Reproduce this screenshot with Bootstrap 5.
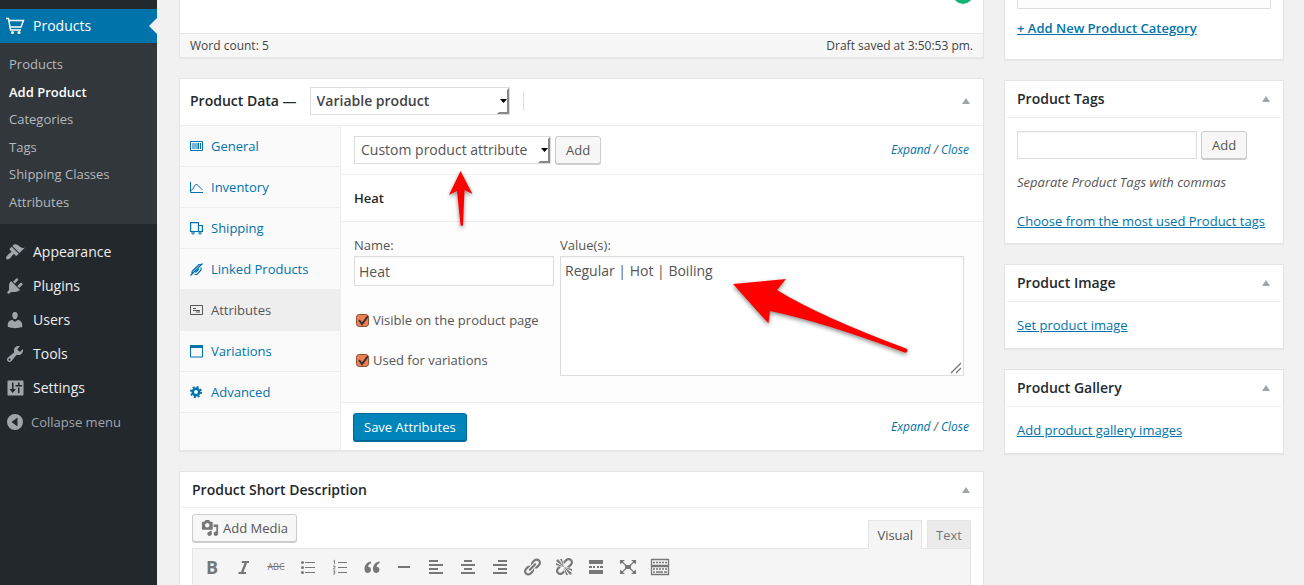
<!DOCTYPE html>
<html lang="en">
<head>
<meta charset="utf-8">
<meta name="viewport" content="width=device-width, initial-scale=1">
<title>Add Product</title>
<link rel="stylesheet" href="https://cdn.jsdelivr.net/npm/bootstrap@5.3.0/dist/css/bootstrap.min.css">
<style>
body{font:13px/18px "Open Sans",sans-serif;color:#555;background:#f1f1f1}
a{color:#0073aa}
button{font-family:inherit}
.layout{min-height:100vh}
/* admin menu */
.side{width:157px;background:#23282d;padding-top:9px;flex:none}
.side-link{display:flex;align-items:center;height:34px;padding-left:5px;gap:8px;font-size:14px;color:#eee;text-decoration:none}
.side-link svg{fill:#a0a5aa;flex:none}
.side-link .cart{fill:none;stroke:#fff}
.side-link.current{background:#0073aa;color:#fff;position:relative}
.side-link.current::after{content:"";position:absolute;right:0;top:9px;border:8px solid transparent;border-left:0;border-right-color:#f1f1f1}
.side-sub{background:#32373c;height:181px;padding:12px 9px 13px;margin-bottom:11px}
.side-sub a{color:#b4b9be;text-decoration:none}
.side-sub a.current{color:#fff;font-weight:600}
.collapse-btn{border:0;background:none;width:100%;font-size:13px;color:#a0a5aa;gap:6px}
/* boxes */
.work{padding:0 20px 0 22px;gap:20px}
.rail{width:280px;flex:none}
.box{background:#fff;border:1px solid #e5e5e5;box-shadow:0 1px 1px rgba(0,0,0,.04);margin-bottom:20px}
.box-open{border-top:0}
.box-head{display:flex;align-items:center;justify-content:space-between;height:36px;padding:0 12px;border-bottom:1px solid #eee}
.rail .box-head{height:37px;margin:0 2px;padding:0 10px}
.box-head h2{font-size:14px;font-weight:600;line-height:20px;color:#23282d;margin:0}
.fold{border:0;background:none;padding:0;width:10px;height:18px;display:flex;align-items:center;justify-content:center}
.fold::before{content:"";border:4px solid transparent;border-top:0;border-bottom:6px solid #a0a5aa}
.rail-body{padding:14px 12px}
.rail-body a,.cat-add{display:block;white-space:nowrap}
.tags-body{padding:13px 12px}
.tag-input{width:180px;height:28px}
.tags-note{font-style:italic;white-space:nowrap;margin:14px 0 21px}
.cat-add{padding:10px 0 22px;font-weight:600}
.status{height:24px;padding:0 10px;background:#f7f7f7;border-top:1px solid #e5e5e5;color:#444;font-size:12px}
.editor-end{height:33px;overflow:hidden;position:relative}
.bubble{position:absolute;right:10px;top:-16px;width:20px;height:20px;border-radius:50%;background:#15b374}
.cat-panel{height:9px;background:#fdfdfd;border:1px solid #ddd;border-top:0}
/* controls */
.form-control,.form-select{border:1px solid #ddd;border-radius:0;background-color:#fff;color:#555;font-size:14px;line-height:20px;box-shadow:inset 0 1px 2px rgba(0,0,0,.05)}
.form-control{padding:4px}
.form-select{height:28px;padding:0 20px 0 6px;line-height:24px;background-image:url("data:image/svg+xml,%3Csvg xmlns='http://www.w3.org/2000/svg' width='12' height='26'%3E%3Cpath d='M3 11h7l-3.500 4z' fill='%23000'/%3E%3Cpath d='M0 26l2-2h8V2l2-2v26z' fill='%23888'/%3E%3C/svg%3E");background-size:12px 26px;background-position:right 0 center;box-shadow:none}
.type-select{width:200px;font-weight:600;color:#444}
.attr-select{width:197px}
.btn-plain{height:28px;border:1px solid #ccc;border-radius:3px;background:#f7f7f7;box-shadow:0 1px 0 #ccc;color:#555;font-size:13px;line-height:18px;padding:0 10px}
.btn-save{height:28px;border:1px solid #006799;border-radius:3px;background:#0085ba;box-shadow:0 1px 0 #006799;color:#fff;font-size:13px;line-height:18px;padding:0 10px}
.form-check-input{width:13px;height:13px;margin:0;border:1px solid #8c5238;border-radius:3px;background-color:#ed8050}
.form-check-input:checked{border-color:#8c5238;background-color:#ed8050;background-size:13px 13px;background-image:url("data:image/svg+xml,%3Csvg xmlns='http://www.w3.org/2000/svg' viewBox='0 0 13 13'%3E%3Cpath d='M3 6l3 4 6-8' fill='none' stroke='%23333' stroke-width='2'/%3E%3C/svg%3E")}
/* product data */
.data-head{height:47px;padding:0 12px 2px 10px;border-bottom:1px solid #eee}
.data-head label{font-size:14px;font-weight:600;color:#23282d;margin-right:13px}
.split{width:1px;height:18px;background:#ddd;margin:0 auto 0 13px}
.tabs-col{width:161px;flex:none;background:#fafafa;border-right:1px solid #eee}
.tabs-col a{display:flex;align-items:center;gap:8px;height:41px;padding:0 10px;border-bottom:1px solid #eee;text-decoration:none}
.tabs-col a.active{background:#eee;color:#555}
.tabs-col svg{fill:none;stroke:currentColor;flex:none}
.bar{height:49px;padding:0 14px 1px 13px;border-bottom:1px solid #eee}
.bar-end{height:47px;padding:0 14px 0 12px}
.bar-title{height:47px;padding:0 13px;border-bottom:1px solid #eee;color:#23282d}
.bar-title h3{font-size:13px;font-weight:600;line-height:18px;margin:0}
.ec{font-size:12px}
.ec a{text-decoration:none}
.attr{height:181px;background:#fdfdfd;border-bottom:1px solid #eee;padding:14px 19px 0 13px;gap:6px}
.attr-left{width:200px;flex:none}
.attr-left .form-control{height:30px}
.field-label{display:block;padding-bottom:2px}
.checks{padding:25px 0 0 2px;gap:22px}
textarea.form-control{height:120px;min-height:120px;resize:vertical;display:block}
textarea::-webkit-resizer{background:url("data:image/svg+xml,%3Csvg xmlns='http://www.w3.org/2000/svg' width='15' height='15'%3E%3Cpath d='M3 13L13 3M8 13l5-5' stroke='%23777' stroke-width='1.300'/%3E%3C/svg%3E") no-repeat right bottom}
.pointer{position:absolute;pointer-events:none;filter:drop-shadow(0 2px 2px rgba(0,0,0,.45));fill:red;overflow:visible}
.pointer-up{left:94px;top:44px}
.pointer-left{left:173px;top:22px}
/* short description */
.desc{margin-bottom:0}
.desc-body{padding:6px 12px 0}
.desc-top{height:34px}
.modes{gap:5px}
.mode{height:28px;padding:0 8px;border:1px solid #e5e5e5;border-bottom:0;background:#ebebeb;color:#777;font-size:13px;line-height:18px}
.mode.active{height:29px;background:#f5f5f5;color:#555;margin-bottom:-1px}
.tools{background:#f5f5f5;border:1px solid #e5e5e5;border-bottom:0;padding:4px 5px 0;gap:4px}
.tools button{width:28px;height:28px;border:0;background:none;padding:0;display:flex;align-items:center;justify-content:center;color:#777}
.tools svg,.media svg{fill:#777}
.tools .t-bold{font:700 18px/20px "Open Sans",sans-serif}
.tools .t-abc{font:400 9px/10px "Open Sans",sans-serif;text-decoration:line-through}
</style>
</head>
<body>
<div class="layout d-flex">
<nav class="side" aria-label="Admin menu">
  <a class="side-link current" href="#"><svg class="cart" width="20" height="20" viewBox="0 0 20 20" stroke-width="1.500"><path d="M1 2.500h2.500l2 11.500H16M4 4.500h14.500l-2.500 6.500H5.500"/><circle cx="7.500" cy="16.500" r=".8"/><circle cx="14" cy="16.500" r=".8"/></svg>Products</a>
  <ul class="side-sub list-unstyled d-flex flex-column justify-content-between">
    <li><a href="#">Products</a></li>
    <li><a href="#" class="current">Add Product</a></li>
    <li><a href="#">Categories</a></li>
    <li><a href="#">Tags</a></li>
    <li><a href="#">Shipping Classes</a></li>
    <li><a href="#">Attributes</a></li>
  </ul>
  <a class="side-link" href="#"><svg width="20" height="20" viewBox="0 0 20 20"><path d="M14.480 11.060L7.410 3.990l1.500-1.500c.5-.56 2.300-.47 3.510.32 1.210.8 1.430 1.280 2.910 2.100 1.180.64 2.450 1.260 4.450.85zm-.71.71L6.700 4.700 4.930 6.470c-.39.39-.39 1.020 0 1.410l1.060 1.060c.39.39.39 1.030 0 1.420-.6.6-1.430 1.110-2.210 1.690-.35.26-.7.53-1.010.84C1.430 14.230.4 16.080 1.400 17.070c.99 1 2.840-.03 4.180-1.360.31-.31.58-.66.85-1.020.57-.78 1.080-1.610 1.690-2.210.39-.39 1.020-.39 1.410 0l1.060 1.060c.39.39 1.020.39 1.410 0z"/></svg>Appearance</a>
  <a class="side-link" href="#"><svg width="20" height="20" viewBox="0 0 20 20"><path d="M13.110 4.360L9.870 7.600 8 5.730l3.240-3.240c.35-.34 1.050-.2 1.560.32.52.51.66 1.210.31 1.550zm-8 1.770l.91-1.120 9.010 9.010-1.190.84c-.71.71-2.630 1.160-3.820 1.160H6.140L4.900 17.260c-.59.59-1.540.59-2.120 0-.59-.58-.59-1.530 0-2.120l1.240-1.240v-3.880c0-1.130.4-3.190 1.090-3.890zm7.260 3.970l3.240-3.240c.34-.35 1.040-.21 1.550.31.52.51.66 1.210.31 1.550l-3.240 3.250z"/></svg>Plugins</a>
  <a class="side-link" href="#"><svg width="20" height="20" viewBox="0 0 20 20"><path d="M10 9.250c-2.270 0-2.730-3.440-2.730-3.440C7 4.020 7.820 2 9.970 2c2.160 0 2.980 2.020 2.710 3.810 0 0-.41 3.440-2.680 3.440zm0 2.570L12.720 10c2.390 0 4.520 2.330 4.520 4.530v2.490s-3.650 1.130-7.240 1.130c-3.650 0-7.240-1.130-7.240-1.130v-2.490c0-2.250 1.940-4.480 4.470-4.480z"/></svg>Users</a>
  <a class="side-link" href="#"><svg width="20" height="20" viewBox="0 0 20 20"><path d="M16.680 9.770c-1.340 1.340-3.300 1.670-4.950.99l-5.410 6.520c-.99.99-2.590.99-3.580 0s-.99-2.590 0-3.570l6.520-5.420c-.68-1.650-.35-3.610.99-4.950 1.280-1.280 3.120-1.620 4.720-1.060l-2.890 2.890 2.820 2.820 2.860-2.870c.53 1.580.18 3.390-1.080 4.650zM3.810 16.210c.4.39 1.040.39 1.430 0 .4-.4.4-1.040 0-1.430-.39-.4-1.030-.4-1.430 0-.39.39-.39 1.030 0 1.430z"/></svg>Tools</a>
  <a class="side-link" href="#"><svg width="20" height="20" viewBox="0 0 20 20"><path fill-rule="evenodd" d="M3.500 2.500h14c.6 0 1 .4 1 1v13c0 .6-.4 1-1 1h-14c-.6 0-1-.4-1-1v-13c0-.6.400-1 1-1zM7 4.500V11H4.500l3.200 4 3.200-4H8.500V4.500zM13 15V9.500h1.500V15h-1.500zM13 4.500V7h-2.500v1.500H17V7h-2.500V4.500z"/></svg>Settings</a>
  <button class="side-link collapse-btn" type="button"><svg width="20" height="20" viewBox="0 0 20 20"><path fill-rule="evenodd" d="M10 2a8 8 0 1 1 0 16 8 8 0 0 1 0-16zm2.500 3.500L6.500 10l6 4.500z"/></svg>Collapse menu</button>
</nav>

<main class="work d-flex flex-grow-1">
<div class="d-flex flex-column flex-grow-1">
  <section class="box box-open">
    <div class="editor-end"><span class="bubble"></span></div>
    <div class="status d-flex justify-content-between align-items-center"><span>Word count: 5</span><span>Draft saved at 3:50:53 pm.</span></div>
  </section>

  <section class="box">
    <div class="data-head d-flex align-items-center">
      <label for="ptype">Product Data —</label>
      <select id="ptype" class="form-select type-select"><option>Variable product</option></select>
      <span class="split"></span>
      <button class="fold" type="button" aria-label="Toggle Product Data"></button>
    </div>
    <div class="d-flex">
      <nav class="tabs-col" aria-label="Product data">
        <a href="#"><svg width="13" height="13" viewBox="0 0 13 13"><path d="M.5 1.500h12v9H.5z"/><path d="M3 3v6M5 3v6M7 3v6M8.500 3v6M10.500 3v6"/></svg>General</a>
        <a href="#"><svg width="13" height="13" viewBox="0 0 13 13"><path d="M.5 1v10.500H13M1 9.500C4 9 3.500 4 6 3.500S9 7 12.500 8.500"/></svg>Inventory</a>
        <a href="#"><svg width="13" height="13" viewBox="0 0 13 13"><path stroke-width="1.200" d="M8.500 9.500V.6H.6v8.900H12.400V3.500H8.500"/><circle cx="3" cy="11" r="1.200"/><circle cx="10" cy="11" r="1.200"/></svg>Shipping</a>
        <a href="#"><svg width="13" height="13" viewBox="0 0 13 13"><path stroke-width="1.200" d="M.5 12.500L12.500.5M5.500 5L9 1.500h3M2 8.500L5.500 5M2 8.500V11M4.500 11.500H7L11 7V4.500M5.500 9.500L9 6"/></svg>Linked Products</a>
        <a href="#" class="active"><svg width="13" height="13" viewBox="0 0 13 13"><path d="M.5 1.500h12v9H.5zM3 4.500h3M3 6.500h7M6 8h4"/></svg>Attributes</a>
        <a href="#"><svg width="13" height="13" viewBox="0 0 13 13"><path d="M.5.500h12v11.500H.5z"/><path stroke-width="3" d="M0 1.500h13"/></svg>Variations</a>
        <a href="#"><svg width="13" height="13" viewBox="0 0 13 13"><circle cx="6" cy="6" r="3.200" stroke-width="2.500"/><circle cx="6" cy="6" r="5" stroke-width="2" stroke-dasharray="2 1.930"/></svg>Advanced</a>
      </nav>
      <div class="flex-grow-1">
        <div class="bar d-flex align-items-center position-relative">
          <select class="form-select attr-select me-1" aria-label="Attribute"><option>Custom product attribute</option></select>
          <button class="btn btn-plain" type="button">Add</button>
          <em class="ec ms-auto"><a href="#">Expand</a> / <a href="#">Close</a></em>
          <svg class="pointer pointer-up" width="50" height="60" viewBox="0 0 50 60"><path d="M25.500 1L14 25l8-4 3.500 34q1.500 2 2.500 0L29.500 20l8 4z"/></svg>
        </div>
        <div class="bar-title d-flex align-items-center"><h3>Heat</h3></div>
        <div class="attr d-flex">
          <div class="attr-left">
            <label for="aname" class="field-label">Name:</label>
            <input id="aname" class="form-control" type="text" value="Heat">
            <div class="checks d-flex flex-column">
              <div class="d-flex align-items-center gap-1"><input class="form-check-input" type="checkbox" id="vis" checked><label for="vis">Visible on the product page</label></div>
              <div class="d-flex align-items-center gap-1"><input class="form-check-input" type="checkbox" id="used" checked><label for="used">Used for variations</label></div>
            </div>
          </div>
          <div class="flex-grow-1">
            <label for="avals" class="field-label">Value(s):</label>
            <div class="position-relative">
              <textarea id="avals" class="form-control">Regular | Hot | Boiling</textarea>
              <svg class="pointer pointer-left" width="176" height="76" viewBox="0 0 176 76"><path d="M0 6L53 1l-9 11Q86 38 173 70.500a2 2 0 0 1-1.500 4Q90 44 37 33l-1.500 12.500z"/></svg>
            </div>
          </div>
        </div>
        <div class="bar-end d-flex align-items-center justify-content-between">
          <button class="btn btn-save" type="button">Save Attributes</button>
          <em class="ec"><a href="#">Expand</a> / <a href="#">Close</a></em>
        </div>
      </div>
    </div>
  </section>

  <section class="box desc flex-grow-1 border-bottom-0 d-flex flex-column">
    <div class="box-head"><h2>Product Short Description</h2><button class="fold" type="button" aria-label="Toggle Product Short Description"></button></div>
    <div class="desc-body flex-grow-1 d-flex flex-column">
      <div class="desc-top d-flex justify-content-between align-items-end">
        <button class="btn btn-plain media d-flex align-items-center align-self-start px-2" type="button"><svg class="me-1" width="18" height="18" viewBox="0 0 20 20"><path d="M13 11V4c0-.55-.45-1-1-1h-1.670L9 1H5L3.670 3H2c-.55 0-1 .45-1 1v7c0 .55.45 1 1 1h10c.55 0 1-.45 1-1zM7 4.500c1.380 0 2.500 1.120 2.500 2.500S8.380 9.500 7 9.500 4.500 8.380 4.500 7 5.620 4.500 7 4.500zM14 6h5v10.500c0 1.380-1.120 2.500-2.500 2.500S14 17.880 14 16.500s1.120-2.500 2.500-2.500c.17 0 .34.02.5.05V9h-3V6zm-4 8.050V13h2v3.500c0 1.380-1.120 2.500-2.500 2.500S7 17.880 7 16.500 8.120 14 9.500 14c.17 0 .34.02.5.05z"/></svg>Add Media</button>
        <div class="modes d-flex align-items-end position-relative"><button class="mode active" type="button">Visual</button><button class="mode" type="button">Text</button></div>
      </div>
      <div class="tools d-flex flex-grow-1">
        <button type="button" aria-label="Bold" class="t-bold">B</button>
        <button type="button" aria-label="Italic"><svg width="20" height="20" viewBox="0 0 20 20"><path d="M8 4h7v2h-2L9.500 15H12v2H4.500v-2H7L10.500 6H7.500z"/></svg></button>
        <button type="button" aria-label="Strikethrough" class="t-abc">ABC</button>
        <button type="button" aria-label="Bulleted list"><svg width="20" height="20" viewBox="0 0 20 20"><path d="M7 5h10v1H7zM7 10h10v1H7zM7 15h10v1H7z"/><circle cx="4.500" cy="5.500" r="1.500"/><circle cx="4.500" cy="10.500" r="1.500"/><circle cx="4.500" cy="15.500" r="1.500"/></svg></button>
        <button type="button" aria-label="Numbered list"><svg width="20" height="20" viewBox="0 0 20 20"><path d="M8 5h9v1H8zM8 10h9v1H8zM8 15h9v1H8z"/><path fill="none" stroke="#777" stroke-width=".9" d="M3.500 4l1-.8V7M3 9h2v1.200L3.300 12h2M3 14h2.200L4 15.300c1.800 0 1.500 2.200-1 1.700"/></svg></button>
        <button type="button" aria-label="Quote"><svg width="20" height="20" viewBox="0 0 20 20"><path d="M9 4.500C5 5 2.500 8 2.500 12c0 2.500 1.300 4 3.300 4C7.500 16 9 14.700 9 12.800c0-1.800-1.200-3-3-3 .3-1.600 1.300-2.800 3-3.500z"/><path d="M17.500 4.500c-4 .5-6.500 3.500-6.500 7.500 0 2.500 1.300 4 3.300 4 1.700 0 3.200-1.300 3.200-3.200 0-1.800-1.200-3-3-3 .3-1.600 1.300-2.800 3-3.500z"/></svg></button>
        <button type="button" aria-label="Horizontal line"><svg width="20" height="20" viewBox="0 0 20 20"><path d="M4 9h12v2H4z"/></svg></button>
        <button type="button" aria-label="Align left"><svg width="20" height="20" viewBox="0 0 20 20"><path d="M3 3h9v2H3zM3 7h14v2H3zM3 11h9v2H3zM3 15h14v2H3z"/></svg></button>
        <button type="button" aria-label="Align center"><svg width="20" height="20" viewBox="0 0 20 20"><path d="M6 3h8v2H6zM3 7h14v2H3zM6 11h8v2H6zM3 15h14v2H3z"/></svg></button>
        <button type="button" aria-label="Align right"><svg width="20" height="20" viewBox="0 0 20 20"><path d="M8 3h9v2H8zM3 7h14v2H3zM8 11h9v2H8zM3 15h14v2H3z"/></svg></button>
        <button type="button" aria-label="Link"><svg width="20" height="20" viewBox="0 0 20 20"><path d="M17.740 2.760c1.680 1.690 1.680 4.410 0 6.100l-1.530 1.520c-1.120 1.120-2.700 1.470-4.140 1.090l2.620-2.610.76-.77.76-.76c.84-.84.84-2.200 0-3.040-.84-.85-2.200-.85-3.040 0l-.77.76-3.380 3.380c-.37-1.440-.02-3.020 1.100-4.140l1.520-1.530c1.690-1.680 4.420-1.680 6.100 0zM8.590 13.430l5.340-5.340c.42-.42.42-1.100 0-1.520-.44-.43-1.130-.39-1.530 0l-5.330 5.340c-.42.42-.42 1.100 0 1.520.44.43 1.130.39 1.520 0zm-.76 2.290l4.140-4.150c.38 1.440.03 3.020-1.090 4.140l-1.520 1.530c-1.690 1.680-4.410 1.680-6.100 0-1.680-1.680-1.680-4.420 0-6.100l1.530-1.520c1.120-1.120 2.700-1.470 4.140-1.100l-4.140 4.150c-.85.84-.85 2.200 0 3.050.84.84 2.200.84 3.040 0z"/></svg></button>
        <button type="button" aria-label="Unlink"><svg width="20" height="20" viewBox="0 0 20 20"><path d="M17.740 2.260c1.680 1.690 1.680 4.410 0 6.100l-1.530 1.520c-.32.33-.69.58-1.080.77L13 10l1.690-1.640.76-.77.76-.76c.84-.84.84-2.200 0-3.040-.84-.85-2.200-.85-3.040 0l-.77.76-.76.76L10 7l-.65-2.140c.19-.38.44-.75.77-1.070l1.520-1.530c1.690-1.680 4.420-1.680 6.100 0zM2 4l8 6-6-8zm4-2l4 8-2-8H6zM2 6l8 4-8-2V6zm7.360 7.690L10 13l.74 2.350-1.380 1.390c-1.690 1.680-4.410 1.680-6.100 0-1.680-1.680-1.680-4.420 0-6.100l1.390-1.380L7 10l-.69.64-1.520 1.530c-.85.84-.85 2.200 0 3.040.84.85 2.200.85 3.040 0zM18 16l-8-6 6 8zm-4 2l-4-8 2 8h2zm4-4l-8-4 8 2v2z"/></svg></button>
        <button type="button" aria-label="Read more"><svg width="20" height="20" viewBox="0 0 20 20"><path d="M3 3h14v4H3zM3 9h3v2H3zM7 9h2v2H7zM11 9h2v2h-2zM14 9h3v2h-3zM3 13h14v4H3z"/></svg></button>
        <button type="button" aria-label="Fullscreen"><svg width="20" height="20" viewBox="0 0 20 20"><path d="M7 8h6v4H7zM2 3h5L2 7.500zM18 3h-5l5 4.500zM2 17h5l-5-4.500zM18 17h-5l5-4.500z"/><path fill="none" stroke="#777" stroke-width="1.200" d="M3 4l5 4.500M17 4l-5 4.500M3 16l5-4.500M17 16l-5-4.500"/></svg></button>
        <button type="button" aria-label="Toggle toolbar"><svg width="20" height="20" viewBox="0 0 20 20"><path fill="none" stroke="#777" stroke-width="1.300" d="M1.500 2.500h17v6h-17zM1.500 9.500h17v8h-17z"/><path fill="none" stroke="#777" stroke-width="1.500" stroke-dasharray="2 1" d="M3 5.500h14M3 12h14"/><path fill="none" stroke="#777" stroke-width="1.500" d="M3 15h2M6 15h7M14 15h3"/></svg></button>
      </div>
    </div>
  </section>
</div>

<aside class="rail">
  <section class="box box-open px-2"><div class="px-1">
    <div class="cat-panel"></div>
    <div class="d-flex"><a href="#" class="cat-add">+ Add New Product Category</a></div>
  </div></section>
  <section class="box">
    <div class="box-head"><h2>Product Tags</h2><button class="fold" type="button" aria-label="Toggle Product Tags"></button></div>
    <div class="tags-body">
      <div class="d-flex gap-1"><input type="text" class="form-control tag-input" aria-label="New tag"><button class="btn btn-plain" type="button">Add</button></div>
      <p class="tags-note">Separate Product Tags with commas</p>
      <div class="d-flex"><a href="#" class="text-nowrap">Choose from the most used Product tags</a></div>
    </div>
  </section>
  <section class="box">
    <div class="box-head"><h2>Product Image</h2><button class="fold" type="button" aria-label="Toggle Product Image"></button></div>
    <div class="rail-body d-flex"><a href="#">Set product image</a></div>
  </section>
  <section class="box">
    <div class="box-head"><h2>Product Gallery</h2><button class="fold" type="button" aria-label="Toggle Product Gallery"></button></div>
    <div class="rail-body d-flex"><a href="#">Add product gallery images</a></div>
  </section>
</aside>
</main>
</div>
<script src="https://cdn.jsdelivr.net/npm/bootstrap@5.3.0/dist/js/bootstrap.bundle.min.js"></script>
</body>
</html>
